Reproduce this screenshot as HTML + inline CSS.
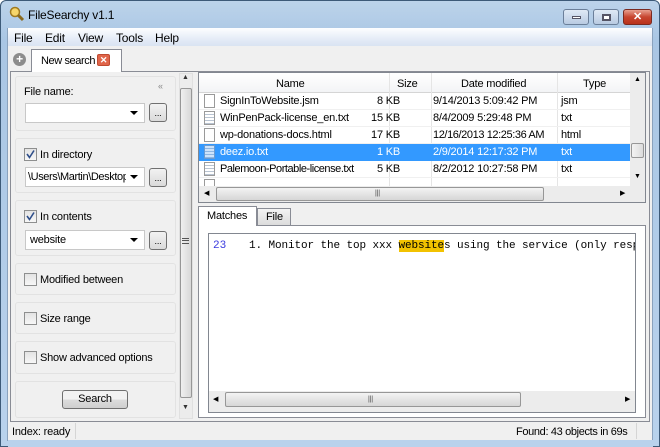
<!DOCTYPE html>
<html><head><meta charset="utf-8"><style>
*{box-sizing:border-box;margin:0;padding:0}
body{width:660px;height:447px;overflow:hidden;background:#fff;font-family:"Liberation Sans",sans-serif;font-size:11px;color:#000;position:relative;letter-spacing:-0.2px}
.a{position:absolute}
.frame{left:0;top:0;width:660px;height:447px;background:linear-gradient(#bcd3ea,#a9c6e4 40px,#b9d2ec);border:1px solid #3d5a78;border-radius:6px 6px 0 0}
.grp{position:absolute;left:15px;width:161px;border:1px solid #e2e2e2;border-radius:3px;background:#f0f0f0}
.cb{position:absolute;width:13px;height:13px;border:1px solid #8e8f8f;background:linear-gradient(#e3e3e3,#f7f7f7);}
.combo{position:absolute;height:20px;background:#fff;border:1px solid #c8c8c8;overflow:hidden;white-space:nowrap}
.combo:after{content:"";position:absolute;right:6px;top:7px;border-left:4px solid transparent;border-right:4px solid transparent;border-top:4px solid #000}
.dot{position:absolute;width:18px;height:19px;border:1px solid #707070;border-radius:3px;background:linear-gradient(#f2f2f2,#dadada);font-size:9px;text-align:center;line-height:18px}
.row{position:absolute;left:199px;width:431px;height:17px;border-bottom:1px solid #f0f0f0;font-size:11px}
.row span{position:absolute;top:2px;white-space:nowrap}
.ic{position:absolute;left:5px;top:1px;width:11px;height:14px;border:1px solid #9a9a9a;background:#fff}
.ic.t{background:repeating-linear-gradient(#fff 0 2px,#b9c4d2 2px 3px)}
.btn{position:absolute;border:1px solid #707070;border-radius:3px;background:linear-gradient(#f2f2f2 50%,#dddddd 50%,#cfcfcf)}
</style></head><body>
<div class="a frame"></div>
<div class="a" style="left:9px;top:6px;width:16px;height:16px">
<svg width="16" height="16"><circle cx="6" cy="6" r="4.5" fill="#f6d66b" stroke="#a07a20" stroke-width="1.5"/><line x1="9" y1="9" x2="14" y2="14" stroke="#8a6a20" stroke-width="3"/></svg></div>
<div class="a" style="left:28px;top:8px;font-size:12px;color:#000">FileSearchy v1.1</div>
<div class="a" style="left:563px;top:9px;width:26px;height:16px;border:1px solid #6b7f99;border-radius:3px;background:linear-gradient(#dfe9f5,#b9cbe2)"><div class="a" style="left:8px;top:6px;width:9px;height:3px;background:#fff;border:1px solid #556"></div></div>
<div class="a" style="left:593px;top:9px;width:26px;height:16px;border:1px solid #6b7f99;border-radius:3px;background:linear-gradient(#dfe9f5,#b9cbe2)"><div class="a" style="left:8px;top:4px;width:9px;height:7px;background:#fff;border:2px solid #556"></div></div>
<div class="a" style="left:623px;top:9px;width:29px;height:16px;border:1px solid #7a2a20;border-radius:3px;background:linear-gradient(#e8a190,#c7452f 50%,#b8321c);color:#fff;font-weight:bold;font-size:11px;text-align:center;line-height:14px">✕</div>
<div class="a" style="left:7px;top:28px;width:646px;height:413px;background:#f0f0f0;border:1px solid #8aa2bd"></div>
<div class="a" style="left:8px;top:28px;width:644px;height:18px;background:linear-gradient(#fdfeff,#e5ecf7 60%,#d9e3f2)"></div>
<div class="a" style="left:14px;top:31px;font-size:12px">File</div>
<div class="a" style="left:45px;top:31px;font-size:12px">Edit</div>
<div class="a" style="left:78px;top:31px;font-size:12px">View</div>
<div class="a" style="left:116px;top:31px;font-size:12px">Tools</div>
<div class="a" style="left:155px;top:31px;font-size:12px">Help</div>
<div class="a" style="left:13px;top:53px;width:13px;height:13px;border-radius:50%;background:#8c8c8c;color:#fff;font-size:12px;font-weight:bold;line-height:12px;text-align:center">+</div>
<div class="a" style="left:31px;top:49px;width:91px;height:23px;background:#fff;border:1px solid #898c95;border-bottom:none"></div>
<div class="a" style="left:41px;top:55px;font-size:11px;letter-spacing:-0.4px">New search</div>
<div class="a" style="left:97px;top:54px;width:13px;height:12px;background:#e0654a;border:1px solid #c04a30;border-radius:2px;color:#fff;font-size:9px;font-weight:bold;text-align:center;line-height:10px">✕</div>
<div class="a" style="left:10px;top:71px;width:640px;height:351px;border:1px solid #898c95;background:#f0f0f0"></div>
<div class="a" style="left:32px;top:71px;width:89px;height:1px;background:#fff"></div>

<div class="grp" style="top:76px;height:55px"></div>
<div class="a" style="left:24px;top:86px">File name:</div>
<div class="a" style="left:158px;top:81px;font-size:9px;color:#888">«</div>
<div class="combo" style="left:25px;top:103px;width:120px"></div>
<div class="dot" style="left:149px;top:103px">...</div>

<div class="grp" style="top:138px;height:55px"></div>
<div class="cb" style="left:24px;top:148px"><svg width="11" height="11" style="position:absolute;left:0;top:0"><path d="M2 5 L4.5 8.5 L9 1.5" stroke="#2e4e8a" stroke-width="1.6" fill="none"/></svg></div>
<div class="a" style="left:40px;top:149px">In directory</div>
<div class="combo" style="left:25px;top:167px;width:120px;padding-left:2px;line-height:18px;letter-spacing:-0.4px"><span style="display:block;width:98px;overflow:hidden">\Users\Martin\Desktop</span></div>
<div class="dot" style="left:149px;top:168px">...</div>

<div class="grp" style="top:200px;height:56px"></div>
<div class="cb" style="left:24px;top:210px"><svg width="11" height="11" style="position:absolute;left:0;top:0"><path d="M2 5 L4.5 8.5 L9 1.5" stroke="#2e4e8a" stroke-width="1.6" fill="none"/></svg></div>
<div class="a" style="left:40px;top:211px">In contents</div>
<div class="combo" style="left:25px;top:230px;width:120px;padding-left:4px;line-height:18px">website</div>
<div class="dot" style="left:149px;top:231px">...</div>

<div class="grp" style="top:263px;height:32px"></div>
<div class="cb" style="left:24px;top:273px"></div>
<div class="a" style="left:40px;top:274px">Modified between</div>
<div class="grp" style="top:302px;height:32px"></div>
<div class="cb" style="left:24px;top:312px"></div>
<div class="a" style="left:40px;top:313px">Size range</div>
<div class="grp" style="top:341px;height:33px"></div>
<div class="cb" style="left:24px;top:351px"></div>
<div class="a" style="left:40px;top:352px">Show advanced options</div>
<div class="grp" style="top:381px;height:37px"></div>
<div class="btn" style="left:62px;top:390px;width:66px;height:19px;text-align:center;line-height:17px">Search</div>

<div class="a" style="left:179px;top:73px;width:14px;height:346px;background:#ececec;border:1px solid #e0e0e0"></div>
<div class="a" style="left:182px;top:74px;font-size:7px;color:#333">▲</div>
<div class="a" style="left:182px;top:404px;font-size:7px;color:#333">▼</div>
<div class="a" style="left:180px;top:88px;width:12px;height:310px;border:1px solid #979797;border-radius:2px;background:linear-gradient(90deg,#f0f0f0,#d8d8d8)"></div>
<div class="a" style="left:182px;top:238px;width:7px;height:6px;border-top:1px solid #555;border-bottom:1px solid #555"></div>
<div class="a" style="left:182px;top:240px;width:7px;height:1px;background:#555"></div>

<div class="a" style="left:198px;top:72px;width:448px;height:131px;background:#fff;border:1px solid #828790"></div>
<div class="a" style="left:199px;top:73px;width:431px;height:20px;background:linear-gradient(#fff,#f3f4f6);border-bottom:1px solid #d5d5d5"></div>
<div class="a" style="left:276px;top:78px">Name</div>
<div class="a" style="left:389px;top:73px;width:1px;height:113px;background:#e5e5e5"></div>
<div class="a" style="left:397px;top:78px">Size</div>
<div class="a" style="left:431px;top:73px;width:1px;height:113px;background:#e5e5e5"></div>
<div class="a" style="left:461px;top:78px">Date modified</div>
<div class="a" style="left:557px;top:73px;width:1px;height:113px;background:#e5e5e5"></div>
<div class="a" style="left:583px;top:78px">Type</div>
<div class="row" style="top:93px"><div class="ic"></div><span style="left:21px">SignInToWebsite.jsm</span><span style="right:230px">8 KB</span><span style="left:234px">9/14/2013 5:09:42 PM</span><span style="left:362px">jsm</span></div>
<div class="row" style="top:110px"><div class="ic t"></div><span style="left:21px">WinPenPack-license_en.txt</span><span style="right:230px">15 KB</span><span style="left:234px">8/4/2009 5:29:48 PM</span><span style="left:362px">txt</span></div>
<div class="row" style="top:127px"><div class="ic"></div><span style="left:21px">wp-donations-docs.html</span><span style="right:230px">17 KB</span><span style="left:234px;letter-spacing:-0.4px">12/16/2013 12:25:36 AM</span><span style="left:362px">html</span></div>
<div class="row" style="top:144px;background:#3399ff;color:#fff;border-bottom:none"><div class="ic t" style="background:repeating-linear-gradient(#cde3fb 0 2px,#8fb6e2 2px 3px);border-color:#6a9ad0"></div><span style="left:21px">deez.io.txt</span><span style="right:230px">1 KB</span><span style="left:234px">2/9/2014 12:17:32 PM</span><span style="left:362px">txt</span></div>
<div class="row" style="top:161px"><div class="ic t"></div><span style="left:21px;letter-spacing:-0.45px">Palemoon-Portable-license.txt</span><span style="right:230px">5 KB</span><span style="left:234px">8/2/2012 10:27:58 PM</span><span style="left:362px">txt</span></div>
<div class="row" style="top:178px;height:8px;overflow:hidden;border:none"><div class="ic"></div></div>
<div class="a" style="left:630px;top:73px;width:15px;height:113px;background:#ececec"></div>
<div class="a" style="left:634px;top:76px;font-size:7px">▲</div>
<div class="a" style="left:634px;top:173px;font-size:7px">▼</div>
<div class="a" style="left:631px;top:143px;width:13px;height:15px;border:1px solid #979797;border-radius:2px;background:linear-gradient(90deg,#f3f3f3,#dcdcdc)"></div>
<div class="a" style="left:199px;top:186px;width:446px;height:16px;background:#ececec"></div>
<div class="a" style="left:204px;top:189px;font-size:7px">◀</div>
<div class="a" style="left:620px;top:189px;font-size:7px">▶</div>
<div class="a" style="left:216px;top:187px;width:328px;height:14px;border:1px solid #979797;border-radius:2px;background:linear-gradient(#f3f3f3,#d6d6d6)"></div>
<div class="a" style="left:375px;top:190px;font-size:7px;color:#444">|||</div>

<div class="a" style="left:198px;top:225px;width:448px;height:193px;background:#fff;border:1px solid #898c95"></div>
<div class="a" style="left:198px;top:206px;width:59px;height:20px;background:#fff;border:1px solid #898c95;border-bottom:none"></div>
<div class="a" style="left:207px;top:210px">Matches</div>
<div class="a" style="left:257px;top:208px;width:34px;height:17px;background:linear-gradient(#f3f3f3,#dcdcdc);border:1px solid #898c95;border-bottom:none"></div>
<div class="a" style="left:266px;top:211px">File</div>
<div class="a" style="left:208px;top:233px;width:428px;height:180px;border:1px solid #828790;background:#fff"></div>
<div class="a" style="left:213px;top:240px;font-family:'Liberation Mono',monospace;font-size:11px;color:#3a3adf;letter-spacing:0">23</div>
<div class="a" style="left:249px;top:240px;font-family:'Liberation Mono',monospace;font-size:11px;white-space:nowrap;width:386px;overflow:hidden;letter-spacing:-0.1px">1. Monitor the top xxx <span style="background:#f2c200">website</span>s using the service (only resp</div>
<div class="a" style="left:209px;top:391px;width:426px;height:21px;background:#ececec"></div>
<div class="a" style="left:213px;top:395px;font-size:7px">◀</div>
<div class="a" style="left:625px;top:395px;font-size:7px">▶</div>
<div class="a" style="left:225px;top:392px;width:296px;height:15px;border:1px solid #979797;border-radius:2px;background:linear-gradient(#f3f3f3,#d6d6d6)"></div>
<div class="a" style="left:368px;top:396px;font-size:7px;color:#444">|||</div>

<div class="a" style="left:12px;top:426px;font-size:11px">Index: ready</div>
<div class="a" style="left:75px;top:423px;width:1px;height:16px;background:#d5d5d5"></div>
<div class="a" style="left:516px;top:426px;font-size:11px;letter-spacing:-0.35px">Found: 43 objects in 69s</div>
<div class="a" style="left:636px;top:423px;width:1px;height:16px;background:#d5d5d5"></div>
<div class="a" style="left:8px;top:440px;width:645px;height:7px;background:#b9d2ec"></div>
</body></html>
